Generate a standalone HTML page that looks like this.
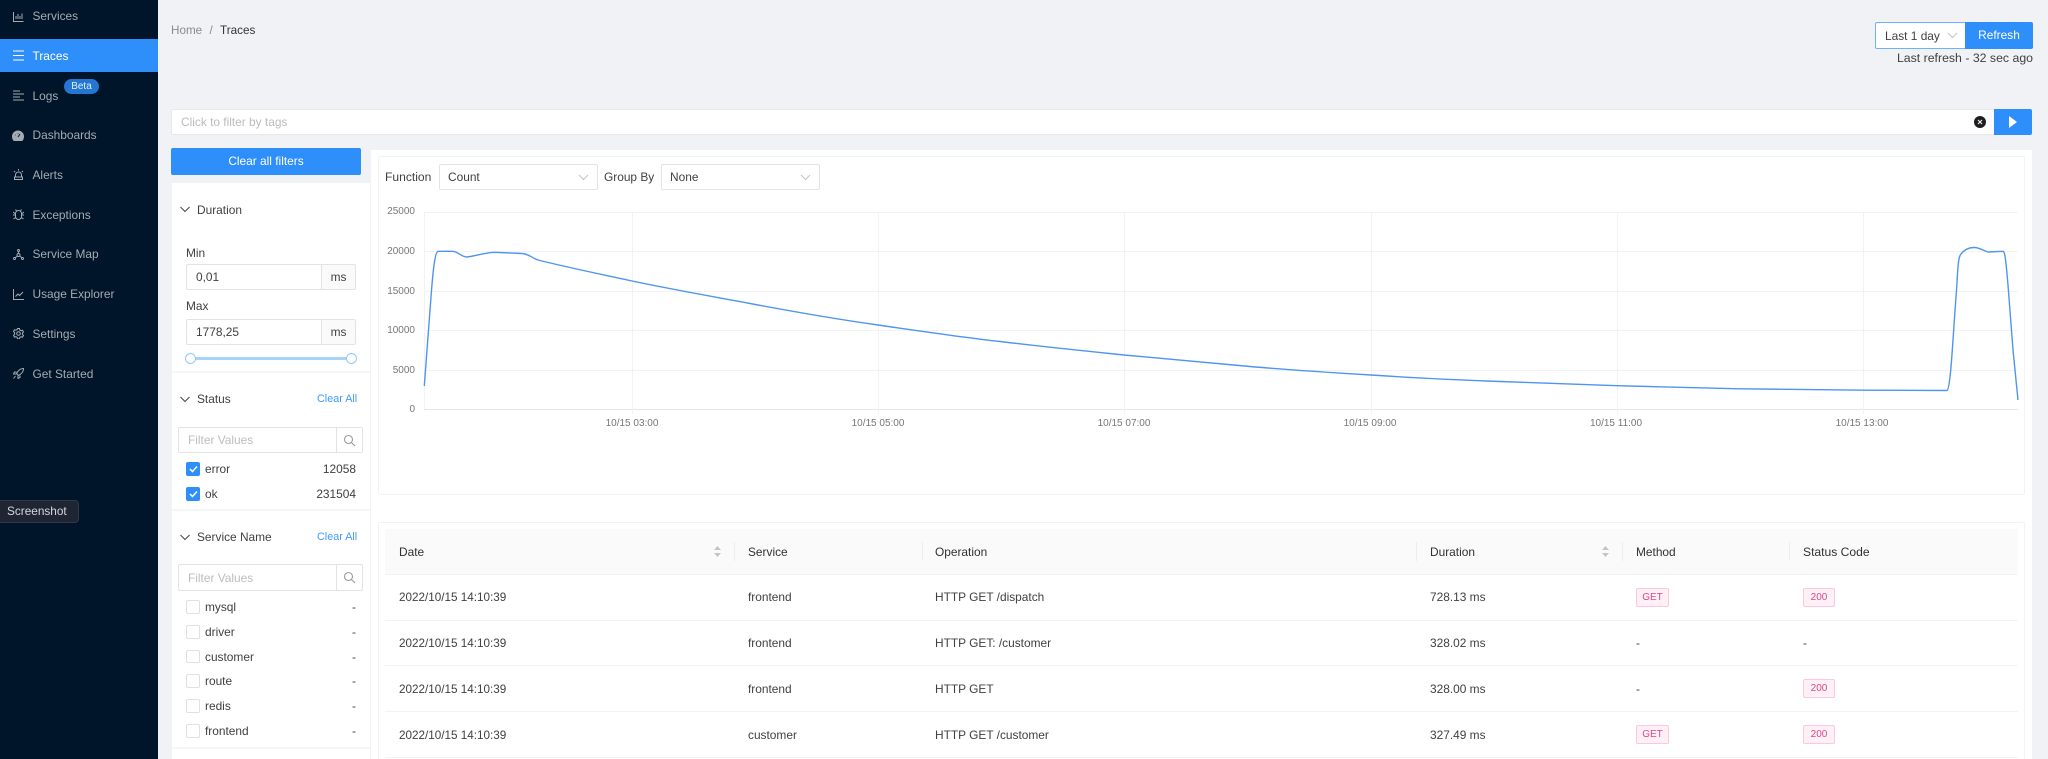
<!DOCTYPE html>
<html><head><meta charset="utf-8"><title>Traces</title>
<style>
html,body{margin:0;padding:0}
body{width:2048px;height:759px;overflow:hidden;position:relative;background:#f0f2f5;font-family:"Liberation Sans",sans-serif;font-size:11.9px;color:#404040;filter:blur(.35px)}
div,span,svg{position:absolute;box-sizing:border-box}
.t{white-space:nowrap;line-height:16px;height:16px}
.nav{left:32.5px;color:#a5abb2;font-size:11.9px;white-space:nowrap;line-height:16px}
.ic{left:13px;width:11px;height:11px}
.ic *{fill:none;stroke:#a5abb2;stroke-width:1}
.box{background:#fff;border:1px solid #e3e3e3;border-radius:2px}
.add{background:#fafafa;border:1px solid #e3e3e3;border-radius:0 2px 2px 0;text-align:center;line-height:24px;color:#404040}
.ph{color:#bdbdbd}
.cb{left:186px;width:13.5px;height:13.5px;background:#fff;border:1px solid #e0e0e0;border-radius:2px}
.cb.on{background:#2f8ffa;border-color:#2f8ffa}
.lnk{color:#3f9bfb;font-size:10.8px}
.th{font-weight:400;color:#303030;font-size:11.9px}
.d{font-size:11.7px;margin-top:1px}
.sep{top:542px;height:19px;width:1px;background:#ededed}
.hr{left:385px;width:1633px;height:1px;background:#f3f3f3}
.tag{height:19px;border:1px solid #fbc9df;background:#fff0f6;border-radius:2px;color:#d9488f;font-size:10px;line-height:17px;text-align:center}
.gr{left:424px;width:1594px;height:1px;background:#f3f3f3}
.gv{top:212px;height:202px;width:1px;background:#f2f2f2}
.ax{color:#777;font-size:10px;line-height:14px;white-space:nowrap}
.yl{width:50px;left:365px;text-align:right}
.xl{top:417px;width:90px;text-align:center}
</style></head><body>

<!-- Sidebar -->
<div style="left:0;top:0;width:158px;height:759px;background:#001529"></div>
<div style="left:0;top:39px;width:158px;height:33px;background:#2f8ffa"></div>

<svg class="ic" style="top:11px" viewBox="0 0 11 11"><path d="M.5 1v9.500h10M3 8V5M5 8V3M7 8V5M9 8V2.500"/></svg>
<div class="nav" style="top:8px">Services</div>
<svg class="ic" style="top:50px" viewBox="0 0 11 11"><path style="stroke:#fff" d="M0 1h11M0 5.500h11M0 10h11"/></svg>
<div class="nav" style="top:47.500px;color:#fff">Traces</div>
<svg class="ic" style="top:90px" viewBox="0 0 11 11"><path d="M0 1h7M0 4h11M0 7h7M0 10h11"/></svg>
<div class="nav" style="top:87.500px">Logs</div>
<div style="left:64px;top:79px;width:35px;height:15px;border-radius:8px;background:#2377d2;color:#dfeeff;font-size:10px;line-height:15px;text-align:center">Beta</div>
<svg class="ic" style="top:130px;left:12px;width:12px;height:12px" viewBox="0 0 12 12"><path style="fill:#a5abb2" d="M6 1a5.500 5.500 0 0 0-5.500 5.500c0 1.800.6 3 1.500 4h8c.9-1 1.500-2.200 1.500-4A5.500 5.500 0 0 0 6 1z"/><path style="stroke:#001529" d="M6 7l2-3M3 5h.5M6 3v.5"/></svg>
<div class="nav" style="top:127px">Dashboards</div>
<svg class="ic" style="top:169px" viewBox="0 0 11 11"><path d="M2.500 8V6a3 3 0 0 1 6 0v2M1.500 8h8v2.500h-8zM1 2l1.200 1.200M10 2L8.800 3.200M5.500 0v1.500"/></svg>
<div class="nav" style="top:167px">Alerts</div>
<svg class="ic" style="top:209px" viewBox="0 0 11 11"><path d="M2.500 4.500a3 3 0 0 1 6 0v3a3 3 0 0 1-6 0zM3.500 2L2.500.5M7.500 2l1-1.500M0 3l2.500 2M11 3L8.500 5M0 6h2.500M8.500 6H11M.5 10l2-1.500M10.500 10l-2-1.500"/></svg>
<div class="nav" style="top:207px">Exceptions</div>
<svg class="ic" style="top:249px" viewBox="0 0 11 11"><circle cx="5.500" cy="6" r="1.500"/><circle cx="5.500" cy="1.500" r="1"/><circle cx="1.500" cy="9.500" r="1"/><circle cx="9.500" cy="9.500" r="1"/><path d="M5.500 2.500v2M4.300 7L2.300 8.800M6.700 7l2 1.800"/></svg>
<div class="nav" style="top:246px">Service Map</div>
<svg class="ic" style="top:289px" viewBox="0 0 11 11"><path d="M.5 0v10.500H11M2.500 7.500l2.500-2.500 1.500 1.500L10 3"/></svg>
<div class="nav" style="top:286px">Usage Explorer</div>
<svg class="ic" style="top:328px" viewBox="0 0 11 11"><circle cx="5.500" cy="5.500" r="1.800"/><path d="M4.500.5h2l.3 1.500 1.300.7 1.400-.5 1 1.800-1.100 1v1.400l1.100 1-1 1.800-1.400-.5-1.300.7-.3 1.500h-2l-.3-1.500-1.300-.7-1.400.5-1-1.800 1.100-1V4.500l-1.100-1 1-1.800 1.400.5 1.300-.7z"/></svg>
<div class="nav" style="top:326px">Settings</div>
<svg class="ic" style="top:368px" viewBox="0 0 11 11"><path d="M10.500.5c-2.500 0-4 .8-5.500 2.800L3.500 5.500 5.500 7.500 7.700 6c2-1.500 2.800-3 2.800-5.500zM3.500 4H1.500L.5 6h3M7 7.500v2l-2 1v-3M2.500 8L.5 10.500"/></svg>
<div class="nav" style="top:365.500px">Get Started</div>

<div style="left:-6px;top:500px;width:85px;height:23px;background:#1f2533;border:1px solid #323846;border-radius:4px;color:#d5d7db;font-size:11.8px;line-height:21px;padding-left:12px">Screenshot</div>

<!-- Breadcrumb -->
<div class="t" style="left:171px;top:22.500px;color:#8a8a8a;font-size:11.7px">Home</div>
<div class="t" style="left:209.500px;top:22.500px;color:#8a8a8a;font-size:11.7px">/</div>
<div class="t" style="left:220px;top:22.500px;color:#333;font-size:11.7px">Traces</div>

<!-- Top right -->
<div style="left:1875px;top:22px;width:91px;height:27px;background:#fff;border:1px solid #6db2fc;border-radius:2px 0 0 2px"></div>
<div class="t" style="left:1885px;top:28px">Last 1 day</div>
<svg style="left:1947px;top:32px;width:11px;height:7px" viewBox="0 0 11 7"><path d="M1 1l4.500 4.500L10 1" fill="none" stroke="#c4c4c4"/></svg>
<div style="left:1965px;top:22px;width:68px;height:27px;background:#2f8ffa;color:#fff;text-align:center;line-height:27px;border-radius:0 2px 2px 0">Refresh</div>
<div class="t" style="right:15px;top:50px;color:#404040;font-size:12.3px">Last refresh - 32 sec ago</div>

<!-- Search -->
<div class="box" style="left:171px;top:109px;width:1824px;height:26px;border-color:#e8e8e8"></div>
<div class="t ph" style="left:181px;top:114px;color:#bcbcbc">Click to filter by tags</div>
<div style="left:1973.500px;top:116px;width:12px;height:12px;border-radius:50%;background:#1f1f1f"></div>
<svg style="left:1976.500px;top:119px;width:6px;height:6px" viewBox="0 0 6 6"><path d="M1 1l4 4M5 1L1 5" stroke="#fff" stroke-width="1"/></svg>
<div style="left:1994px;top:109px;width:38px;height:26px;background:#2f8ffa;border-radius:0 2px 2px 0"></div>
<svg style="left:2008px;top:116px;width:10px;height:12px" viewBox="0 0 10 12"><path d="M1 0l8 6-8 6z" fill="#fff"/></svg>

<!-- Filter panel -->
<div style="left:171px;top:148px;width:190px;height:27px;background:#2f8ffa;border-radius:2px;color:#fff;text-align:center;line-height:27px">Clear all filters</div>
<div style="left:172px;top:183px;width:198px;height:576px;background:#fff"></div>
<div style="left:172px;top:371px;width:198px;height:2px;background:#f6f6f6"></div>
<div style="left:172px;top:509px;width:198px;height:2px;background:#f6f6f6"></div>
<div style="left:172px;top:747px;width:198px;height:2px;background:#f6f6f6"></div>

<svg style="left:180px;top:206px;width:10px;height:7px" viewBox="0 0 10 7"><path d="M.5 1l4.500 4.500L9.500 1" fill="none" stroke="#444"/></svg>
<div class="t" style="left:197px;top:202px">Duration</div>
<div class="t" style="left:186px;top:245px">Min</div>
<div class="box" style="left:186px;top:264px;width:136px;height:26px"></div>
<div class="t" style="left:196px;top:269px">0,01</div>
<div class="add" style="left:321px;top:264px;width:35px;height:26px">ms</div>
<div class="t" style="left:186px;top:298px">Max</div>
<div class="box" style="left:186px;top:319px;width:136px;height:26px"></div>
<div class="t" style="left:196px;top:324px">1778,25</div>
<div class="add" style="left:321px;top:319px;width:35px;height:26px">ms</div>
<div style="left:192px;top:356.500px;width:158px;height:3px;background:#a6d4fb"></div>
<div style="left:185px;top:353px;width:11px;height:11px;border-radius:50%;background:#fff;border:1.500px solid #92c9fa"></div>
<div style="left:346px;top:353px;width:11px;height:11px;border-radius:50%;background:#fff;border:1.500px solid #92c9fa"></div>

<svg style="left:180px;top:396px;width:10px;height:7px" viewBox="0 0 10 7"><path d="M.5 1l4.500 4.500L9.500 1" fill="none" stroke="#444"/></svg>
<div class="t" style="left:197px;top:391px">Status</div>
<div class="t lnk" style="left:317px;top:391px">Clear All</div>
<div class="box" style="left:178px;top:427px;width:159px;height:26px"></div>
<div class="t ph" style="left:188px;top:432px">Filter Values</div>
<div class="box" style="left:336px;top:427px;width:27px;height:26px;border-radius:0 2px 2px 0"></div>
<svg style="left:343px;top:434px;width:13px;height:13px" viewBox="0 0 13 13"><circle cx="5.500" cy="5.500" r="4" fill="none" stroke="#999" stroke-width="1.100"/><path d="M8.500 8.500L12 12" stroke="#999" stroke-width="1.100"/></svg>
<div class="cb on" style="top:462px"></div><svg style="left:188.500px;top:465px;width:9px;height:8px" viewBox="0 0 9 8"><path d="M1 4l2.500 2.500L8 1.500" fill="none" stroke="#fff" stroke-width="1.500"/></svg>
<div class="t" style="left:205px;top:461px">error</div><div class="t" style="right:1692px;top:461px">12058</div>
<div class="cb on" style="top:487px"></div><svg style="left:188.500px;top:490px;width:9px;height:8px" viewBox="0 0 9 8"><path d="M1 4l2.500 2.500L8 1.500" fill="none" stroke="#fff" stroke-width="1.500"/></svg>
<div class="t" style="left:205px;top:486px">ok</div><div class="t" style="right:1692px;top:486px">231504</div>

<svg style="left:180px;top:534px;width:10px;height:7px" viewBox="0 0 10 7"><path d="M.5 1l4.500 4.500L9.500 1" fill="none" stroke="#444"/></svg>
<div class="t" style="left:197px;top:529px">Service Name</div>
<div class="t lnk" style="left:317px;top:529px">Clear All</div>
<div class="box" style="left:178px;top:564px;width:159px;height:27px"></div>
<div class="t ph" style="left:188px;top:569.500px">Filter Values</div>
<div class="box" style="left:336px;top:564px;width:27px;height:27px;border-radius:0 2px 2px 0"></div>
<svg style="left:343px;top:571px;width:13px;height:13px" viewBox="0 0 13 13"><circle cx="5.500" cy="5.500" r="4" fill="none" stroke="#999" stroke-width="1.100"/><path d="M8.500 8.500L12 12" stroke="#999" stroke-width="1.100"/></svg>
<div class="cb" style="top:600px"></div><div class="t" style="left:205px;top:599px">mysql</div><div class="t" style="right:1692px;top:599px">-</div>
<div class="cb" style="top:625px"></div><div class="t" style="left:205px;top:624px">driver</div><div class="t" style="right:1692px;top:624px">-</div>
<div class="cb" style="top:649.500px"></div><div class="t" style="left:205px;top:648.500px">customer</div><div class="t" style="right:1692px;top:648.500px">-</div>
<div class="cb" style="top:674px"></div><div class="t" style="left:205px;top:673px">route</div><div class="t" style="right:1692px;top:673px">-</div>
<div class="cb" style="top:699px"></div><div class="t" style="left:205px;top:698px">redis</div><div class="t" style="right:1692px;top:698px">-</div>
<div class="cb" style="top:724px"></div><div class="t" style="left:205px;top:723px">frontend</div><div class="t" style="right:1692px;top:723px">-</div>

<!-- Right outer panel -->
<div style="left:371px;top:150px;width:1661px;height:609px;background:#fff"></div>

<!-- Chart card -->
<div style="left:378px;top:156px;width:1647px;height:339px;background:#fff;border:1px solid #f3f3f3;border-radius:2px"></div>
<div class="t" style="left:385px;top:169px;font-size:12.1px">Function</div>
<div class="box" style="left:438.500px;top:164px;width:159px;height:26px"></div>
<div class="t" style="left:448px;top:169px">Count</div>
<svg style="left:578px;top:174px;width:11px;height:7px" viewBox="0 0 11 7"><path d="M1 1l4.500 4.500L10 1" fill="none" stroke="#c4c4c4"/></svg>
<div class="t" style="left:604px;top:169px">Group By</div>
<div class="box" style="left:660.500px;top:164px;width:159px;height:26px"></div>
<div class="t" style="left:670px;top:169px">None</div>
<svg style="left:800px;top:174px;width:11px;height:7px" viewBox="0 0 11 7"><path d="M1 1l4.500 4.500L10 1" fill="none" stroke="#c4c4c4"/></svg>

<div class="gr" style="top:211.500px"></div>
<div class="gr" style="top:251px"></div>
<div class="gr" style="top:291px"></div>
<div class="gr" style="top:330px"></div>
<div class="gr" style="top:370px"></div>
<div class="gr" style="top:409px;background:#e6e6e6"></div>
<div class="gv" style="left:424px;height:197px"></div>
<div class="gv" style="left:631.500px"></div>
<div class="gv" style="left:878px"></div>
<div class="gv" style="left:1124px"></div>
<div class="gv" style="left:1371px"></div>
<div class="gv" style="left:1617px"></div>
<div class="gv" style="left:1862.500px"></div>
<div class="ax yl" style="top:205px">25000</div>
<div class="ax yl" style="top:244.500px">20000</div>
<div class="ax yl" style="top:284.500px">15000</div>
<div class="ax yl" style="top:323.500px">10000</div>
<div class="ax yl" style="top:363.500px">5000</div>
<div class="ax yl" style="top:402.500px">0</div>
<div class="ax xl" style="left:587px">10/15 03:00</div>
<div class="ax xl" style="left:833px">10/15 05:00</div>
<div class="ax xl" style="left:1079px">10/15 07:00</div>
<div class="ax xl" style="left:1325px">10/15 09:00</div>
<div class="ax xl" style="left:1571px">10/15 11:00</div>
<div class="ax xl" style="left:1817px">10/15 13:00</div>
<svg style="left:0;top:0;width:2048px;height:759px" viewBox="0 0 2048 759"><path fill="none" stroke="#4f95ef" stroke-width="1.400" stroke-linejoin="round" d="M424.300 386L431 297C433 270 435 252 438 251.300L453 251.300C459 252 461 257 467 257C476 256 486 252.300 495 252.300L522 253.500C529 254 532 258 538 260C570 268 600 274 632 281C675 290 710 296 750 303.500C795 312 835 319 878 325C920 331 960 337 1000 341.500C1045 347 1085 351 1124 355C1170 359.500 1210 363 1250 366.500C1290 370 1330 372.500 1371 375C1415 378 1458 380 1500 381.500C1540 383 1580 384.700 1617 385.700C1660 387 1700 388 1740 388.800C1785 389.500 1825 390 1863 390.200L1947 390.500C1950 389 1952 355 1954 325L1957 283C1958 262 1959 256 1961 254C1965 249 1969 247.500 1974 247.500C1980 247.500 1984 251 1988 252L2003 251.300C2005 251 2006 262 2008 285L2013 350L2018 400"/></svg>

<!-- Table card -->
<div style="left:378px;top:522px;width:1647px;height:237px;background:#fff;border:1px solid #f3f3f3;border-bottom:0;border-radius:2px 2px 0 0"></div>
<div style="left:385px;top:529px;width:1633px;height:45px;background:#fafafa"></div>
<div class="t th" style="left:399px;top:544px">Date</div>
<div class="t th" style="left:748px;top:544px">Service</div>
<div class="t th" style="left:935px;top:544px">Operation</div>
<div class="t th" style="left:1430px;top:544px">Duration</div>
<div class="t th" style="left:1636px;top:544px">Method</div>
<div class="t th" style="left:1803px;top:544px;font-size:12.1px">Status Code</div>
<div class="sep" style="left:734px"></div><div class="sep" style="left:922px"></div><div class="sep" style="left:1416px"></div><div class="sep" style="left:1622px"></div><div class="sep" style="left:1789px"></div>
<svg style="left:713.500px;top:546px;width:7px;height:11px" viewBox="0 0 7 11"><path d="M3.500 0L7 4H0zM3.500 11L0 7h7z" fill="#c4c4c4"/></svg>
<svg style="left:1601.500px;top:546px;width:7px;height:11px" viewBox="0 0 7 11"><path d="M3.500 0L7 4H0zM3.500 11L0 7h7z" fill="#c4c4c4"/></svg>

<div class="hr" style="top:574px"></div><div class="hr" style="top:620px"></div><div class="hr" style="top:665px"></div><div class="hr" style="top:711px"></div><div class="hr" style="top:757px"></div>

<div class="t d" style="left:399px;top:589px">2022/10/15 14:10:39</div><div class="t" style="left:748px;top:589px">frontend</div><div class="t" style="left:935px;top:589px">HTTP GET /dispatch</div><div class="t" style="left:1430px;top:589px">728.13 ms</div>
<div class="tag" style="left:1636px;top:588px;width:33px">GET</div><div class="tag" style="left:1803px;top:588px;width:32px">200</div>

<div class="t d" style="left:399px;top:635px">2022/10/15 14:10:39</div><div class="t" style="left:748px;top:635px">frontend</div><div class="t" style="left:935px;top:635px">HTTP GET: /customer</div><div class="t" style="left:1430px;top:635px">328.02 ms</div>
<div class="t" style="left:1636px;top:635px">-</div><div class="t" style="left:1803px;top:635px">-</div>

<div class="t d" style="left:399px;top:681px">2022/10/15 14:10:39</div><div class="t" style="left:748px;top:681px">frontend</div><div class="t" style="left:935px;top:681px">HTTP GET</div><div class="t" style="left:1430px;top:681px">328.00 ms</div>
<div class="t" style="left:1636px;top:681px">-</div><div class="tag" style="left:1803px;top:679px;width:32px">200</div>

<div class="t d" style="left:399px;top:727px">2022/10/15 14:10:39</div><div class="t" style="left:748px;top:727px">customer</div><div class="t" style="left:935px;top:727px">HTTP GET /customer</div><div class="t" style="left:1430px;top:727px">327.49 ms</div>
<div class="tag" style="left:1636px;top:725px;width:33px">GET</div><div class="tag" style="left:1803px;top:725px;width:32px">200</div>

</body></html>
